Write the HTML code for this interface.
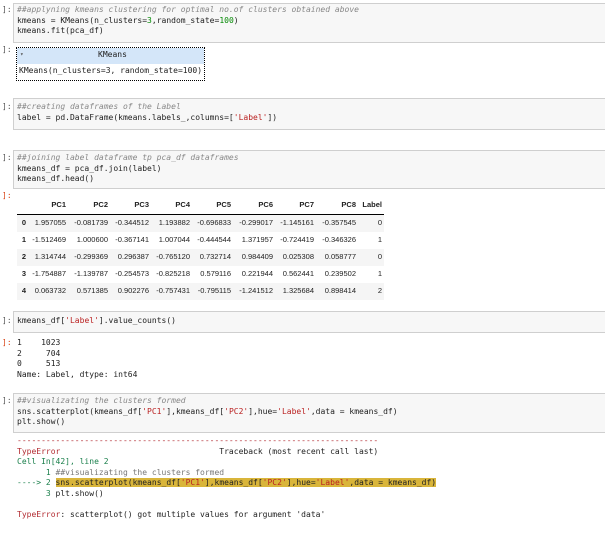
<!DOCTYPE html>
<html><head><meta charset="utf-8"><style>
body{margin:0;width:605px;height:538px;background:#fff;position:relative;overflow:hidden;font-family:"DejaVu Sans Mono","Liberation Mono",monospace;font-size:8px;color:#222}
.a{position:absolute;white-space:pre;line-height:10.5px}
.box{position:absolute;left:13px;right:-2px;background:#f7f7f7;border:1px solid #cfcfcf}
.pi{color:#555}.po{color:#d84315}
.c{color:#888;font-style:italic}.s{color:#ba2121}.n{color:#080}
.t{position:absolute;font-family:"Liberation Sans",sans-serif;font-size:7.5px;white-space:nowrap}
.row{position:absolute;left:17px;width:367px;height:17px}
.h{font-weight:bold}
.er{color:#b22b31}.g{color:#1a7f4b}
</style></head><body>
<div class="a pi" style="left:2px;top:5px">]:</div>
<div class="box" style="top:3px;height:38px"></div>
<div class="a" style="left:17px;top:5px"><span class="c">##applyning kmeans clustering for optimal no.of clusters obtained above</span>
kmeans = KMeans(n_clusters=<span class="n">3</span>,random_state=<span class="n">100</span>)
kmeans.fit(pca_df)</div>

<div class="a pi" style="left:2px;top:45px">]:</div>
<div style="position:absolute;left:16px;top:47px;width:187px;height:32px;border:1px dotted #000;background:#fff"></div>
<div style="position:absolute;left:17px;top:48px;width:187px;height:16px;background:#d4e6f9"></div>
<div class="a" style="left:20px;top:50px;font-size:6px;color:#555">▾</div>
<div class="a" style="left:98px;top:50px">KMeans</div>
<div class="a" style="left:19px;top:66px">KMeans(n_clusters=3, random_state=100)</div>

<div class="a pi" style="left:2px;top:102px">]:</div>
<div class="box" style="top:98px;height:30px"></div>
<div class="a" style="left:17px;top:102px"><span class="c">##creating dataframes of the Label</span>
label = pd.DataFrame(kmeans.labels_,columns=[<span class="s">'Label'</span>])</div>

<div class="a pi" style="left:2px;top:153px">]:</div>
<div class="box" style="top:150px;height:37px"></div>
<div class="a" style="left:17px;top:153px"><span class="c">##joining label dataframe tp pca_df dataframes</span>
kmeans_df = pca_df.join(label)
kmeans_df.head()</div>

<div class="a po" style="left:2px;top:191px">]:</div>
<div class="row" style="top:214px;height:1px;background:#000"></div>
<div class="row" style="top:215px;background:#f5f5f5"></div>
<div class="row" style="top:249px;background:#f5f5f5"></div>
<div class="row" style="top:283px;background:#f5f5f5"></div>
<div id="tbl"></div>

<div class="a pi" style="left:2px;top:316px">]:</div>
<div class="box" style="top:311px;height:20px"></div>
<div class="a" style="left:17px;top:316px">kmeans_df[<span class="s">'Label'</span>].value_counts()</div>
<div class="a po" style="left:2px;top:338px">]:</div>
<div class="a" style="left:17px;top:338px">1    1023
2     704
0     513
Name: Label, dtype: int64</div>

<div class="a pi" style="left:2px;top:396px">]:</div>
<div class="box" style="top:393px;height:38px"></div>
<div class="a" style="left:17px;top:396px"><span class="c">##visualizating the clusters formed</span>
sns.scatterplot(kmeans_df[<span class="s">'PC1'</span>],kmeans_df[<span class="s">'PC2'</span>],hue=<span class="s">'Label'</span>,data = kmeans_df)
plt.show()</div>

<div class="a" style="left:17px;top:436px"><span class="er">---------------------------------------------------------------------------</span>
<span class="er">TypeError</span>                                 Traceback (most recent call last)
<span class="g">Cell In[42], line 2</span>
<span class="g">      1</span> <span style="color:#777">##visualizating the clusters formed</span>
<span class="g">----&gt; 2</span> <span style="background:#d9b53a">sns.scatterplot(kmeans_df[<span class="s">'PC1'</span>],kmeans_df[<span class="s">'PC2'</span>],hue=<span class="s">'Label'</span>,data = kmeans_df)</span>
<span class="g">      3</span> plt.show()

<span class="er">TypeError</span>: scatterplot() got multiple values for argument 'data'</div>
<script>
var cols=[66,108,149,190,231,273,314,356,382];
var hd=["PC1","PC2","PC3","PC4","PC5","PC6","PC7","PC8","Label"];
var rows=[["1.957055","-0.081739","-0.344512","1.193882","-0.696833","-0.299017","-1.145161","-0.357545","0"],
["-1.512469","1.000600","-0.367141","1.007044","-0.444544","1.371957","-0.724419","-0.346326","1"],
["1.314744","-0.299369","0.296387","-0.765120","0.732714","0.984409","0.025308","0.058777","0"],
["-1.754887","-1.139787","-0.254573","-0.825218","0.579116","0.221944","0.562441","0.239502","1"],
["0.063732","0.571385","0.902276","-0.757431","-0.795115","-1.241512","1.325684","0.898414","2"]];
var h="";
function cell(x,y,t,b){h+='<div class="t'+(b?' h':'')+'" style="right:'+(605-x)+'px;top:'+y+'px">'+t+'</div>';}
hd.forEach(function(t,i){cell(cols[i],200,t,1);});
rows.forEach(function(r,j){var y=218+17*j;cell(26,y,String(j),1);r.forEach(function(t,i){cell(cols[i],y,t,0);});});
document.getElementById("tbl").innerHTML=h;
</script>
</body></html>
